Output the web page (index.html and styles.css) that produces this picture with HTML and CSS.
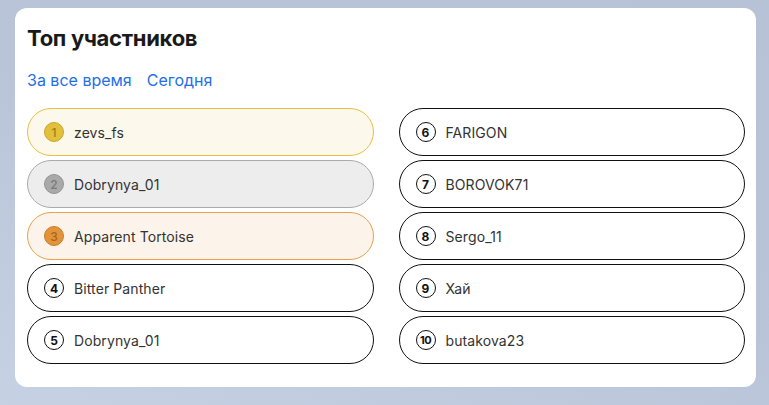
FILE: index.html
```html
<!DOCTYPE html>
<html lang="ru">
<head>
<meta charset="utf-8">
<title>Топ участников</title>
<link rel="stylesheet" href="styles.css">
</head>
<body>
<div class="card">
  <h1 class="title">Топ участников</h1>
  <div class="tabs">
    <a class="tab">За все время</a>
    <a class="tab">Сегодня</a>
  </div>
  <div class="grid">
    <div class="row gold"><span class="badge">1</span><span class="name">zevs_fs</span></div>
    <div class="row"><span class="badge">6</span><span class="name">FARIGON</span></div>
    <div class="row silver"><span class="badge">2</span><span class="name">Dobrynya_01</span></div>
    <div class="row"><span class="badge">7</span><span class="name">BOROVOK71</span></div>
    <div class="row bronze"><span class="badge">3</span><span class="name">Apparent Tortoise</span></div>
    <div class="row"><span class="badge">8</span><span class="name">Sergo_11</span></div>
    <div class="row"><span class="badge">4</span><span class="name">Bitter Panther</span></div>
    <div class="row"><span class="badge">9</span><span class="name">Хай</span></div>
    <div class="row"><span class="badge">5</span><span class="name">Dobrynya_01</span></div>
    <div class="row"><span class="badge small">10</span><span class="name">butakova23</span></div>
  </div>
</div>
</body>
</html>
```
FILE: styles.css
```css
html, body {
  margin: 0;
  height: 100%;
}
body {
  background: linear-gradient(20deg, #c7d1e4 0%, #bac4d8 50%, #b8c2d7 100%);
  font-family: Inter, "Noto Sans", sans-serif;
  padding-top: 8px;
  box-sizing: border-box;
}
.card {
  margin-left: 15px;
  width: 741px;
  box-sizing: border-box;
  background: #fff;
  border-radius: 12px;
  padding: 16px 11px 23px 12px;
}
.title {
  margin: 0;
  font-size: 22px;
  line-height: 28px;
  font-weight: 700;
  color: #1a1a1a;
  letter-spacing: -0.3px;
}
.tabs {
  margin-top: 18px;
  display: flex;
  gap: 15px;
}
.tab {
  font-size: 16px;
  line-height: 20px;
  color: #1f6fe6;
  cursor: pointer;
}
.grid {
  margin-top: 18px;
  display: grid;
  grid-template-columns: 1fr 1fr;
  column-gap: 25px;
  row-gap: 4px;
}
.row {
  height: 48px;
  box-sizing: border-box;
  border: 1px solid #111;
  border-radius: 24px;
  display: flex;
  align-items: center;
  padding-left: 16px;
  gap: 10px;
  background: #fff;
}
.badge {
  width: 20px;
  height: 20px;
  box-sizing: border-box;
  border-radius: 50%;
  border: 1.5px solid #111;
  display: flex;
  align-items: center;
  justify-content: center;
  font-size: 12px;
  font-weight: 700;
  color: #111;
}
.badge.small {
  font-size: 11px;
  letter-spacing: -0.5px;
}
.name {
  font-size: 14px;
  color: #333;
  letter-spacing: 0.1px;
}
.gold {
  background: #fcf8ec;
  border-color: #e7c13f;
}
.gold .badge {
  background: #e2c03b;
  border: 1px solid #c9a52e;
  color: #9c7f18;
  font-weight: 500;
}
.silver {
  background: #ededed;
  border-color: #ababab;
}
.silver .badge {
  background: #a9a9a9;
  border: 1px solid #959595;
  color: #7a7a7a;
  font-weight: 500;
}
.bronze {
  background: #fcf3ea;
  border-color: #e9a24c;
}
.bronze .badge {
  background: #e3943a;
  border: 1px solid #c97d2a;
  color: #a9641a;
  font-weight: 500;
}
```
